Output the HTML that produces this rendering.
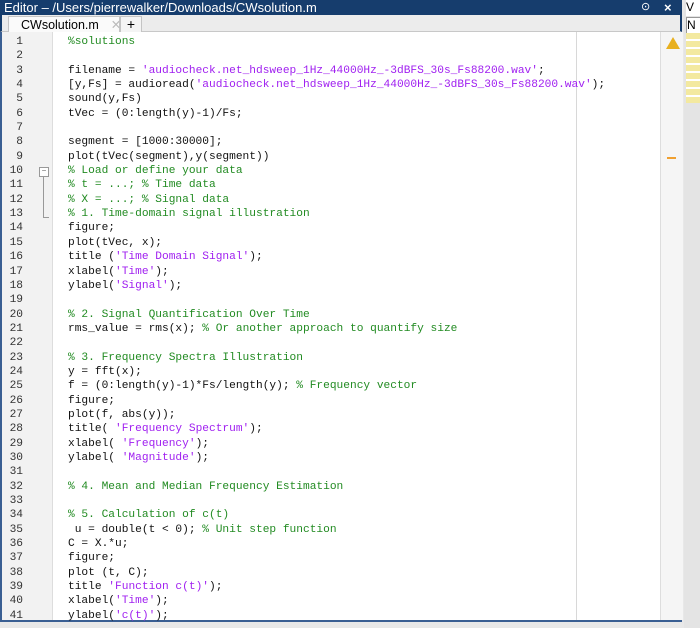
<!DOCTYPE html>
<html><head><style>
body{margin:0;width:700px;height:628px;overflow:hidden;background:#e8e8e8;font-family:"Liberation Sans",sans-serif;position:relative}
.title{position:absolute;left:0;top:0;width:682px;height:15px;background:#163d6d;color:#fff;font-size:13px;line-height:15px;padding-left:4px;box-sizing:border-box}
.tabs{position:absolute;left:0;top:15px;width:682px;height:17px;background:#ececec;border-bottom:1px solid #c8c8c8;border-left:2px solid #163d6d;border-right:2px solid #163d6d;box-sizing:border-box}
.tab{position:absolute;left:6px;top:1px;height:16px;width:112px;background:#fafafa;border:1px solid #c4c4c4;border-bottom:none;font-size:12.5px;line-height:16px;padding-left:12px;box-sizing:border-box}
.tab span{color:#bbb;margin-left:12px}
.plus{position:absolute;left:118px;top:1px;width:22px;height:16px;background:#f4f4f4;border:1px solid #c4c4c4;border-bottom:none;text-align:center;font-size:14px;line-height:15px;box-sizing:border-box}
.ed{position:absolute;left:0;top:32px;width:682px;height:590px;background:#fff;border:2px solid #3a5f93;border-top:none;box-sizing:border-box}
.gut{position:absolute;left:0;top:0;width:50px;height:100%;background:#f2f2f2;border-right:1px solid #ddd}
.vl{position:absolute;left:574px;top:0;width:1px;height:100%;background:#d8d8d8}
.rs{position:absolute;left:658px;top:0;width:22px;height:100%;background:#f5f5f5;border-left:1px solid #ddd}
pre{margin:0;position:absolute;top:3px;font-family:"Liberation Mono",monospace;font-size:11.2px;line-height:14.35px}
.nums{left:0;width:21px;text-align:right;color:#333}
.code{left:66px;color:#111}
.c{color:#228b22}.s{color:#a020f0}
.rp{position:absolute;left:684px;top:0;width:16px;height:628px;background:#e4e4e4}
</style></head><body>
<div class="title">Editor – /Users/pierrewalker/Downloads/CWsolution.m<span style="position:absolute;left:641px;top:0;font-size:11px">⊙</span><span style="position:absolute;left:664px;top:0;font-weight:bold">×</span></div>
<div class="tabs"><div class="tab">CWsolution.m<span>✕</span></div><div class="plus">+</div></div>
<div class="ed">
<div class="gut"></div>
<div style="position:absolute;left:37px;top:135px;width:8px;height:8px;border:1px solid #999;background:#fff;font-size:8px;line-height:6px;text-align:center;color:#666">−</div>
<div style="position:absolute;left:41px;top:145px;width:1px;height:40px;background:#999"></div>
<div style="position:absolute;left:41px;top:185px;width:6px;height:1px;background:#999"></div>
<div class="vl"></div>
<div class="rs"><div style="position:absolute;left:5px;top:5px;width:0;height:0;border-left:7px solid transparent;border-right:7px solid transparent;border-bottom:12px solid #e8b020"></div><div style="position:absolute;left:6px;top:125px;width:9px;height:2px;background:#f0a030"></div></div>
<pre class="nums">1
2
3
4
5
6
7
8
9
10
11
12
13
14
15
16
17
18
19
20
21
22
23
24
25
26
27
28
29
30
31
32
33
34
35
36
37
38
39
40
41</pre>
<pre class="code"><span class="c">%solutions</span>

filename = <span class="s">'audiocheck.net_hdsweep_1Hz_44000Hz_-3dBFS_30s_Fs88200.wav'</span>;
[y,Fs] = audioread(<span class="s">'audiocheck.net_hdsweep_1Hz_44000Hz_-3dBFS_30s_Fs88200.wav'</span>);
sound(y,Fs)
tVec = (0:length(y)-1)/Fs;

segment = [1000:30000];
plot(tVec(segment),y(segment))
<span class="c">% Load or define your data</span>
<span class="c">% t = ...; % Time data</span>
<span class="c">% X = ...; % Signal data</span>
<span class="c">% 1. Time-domain signal illustration</span>
figure;
plot(tVec, x);
title (<span class="s">'Time Domain Signal'</span>);
xlabel(<span class="s">'Time'</span>);
ylabel(<span class="s">'Signal'</span>);

<span class="c">% 2. Signal Quantification Over Time</span>
rms_value = rms(x); <span class="c">% Or another approach to quantify size</span>

<span class="c">% 3. Frequency Spectra Illustration</span>
y = fft(x);
f = (0:length(y)-1)*Fs/length(y); <span class="c">% Frequency vector</span>
figure;
plot(f, abs(y));
title( <span class="s">'Frequency Spectrum'</span>);
xlabel( <span class="s">'Frequency'</span>);
ylabel( <span class="s">'Magnitude'</span>);

<span class="c">% 4. Mean and Median Frequency Estimation</span>

<span class="c">% 5. Calculation of c(t)</span>
 u = double(t &lt; 0); <span class="c">% Unit step function</span>
C = X.*u;
figure;
plot (t, C);
title <span class="s">'Function c(t)'</span>);
xlabel(<span class="s">'Time'</span>);
ylabel(<span class="s">'c(t)'</span>);</pre>
</div>
<div class="rp">
<div style="position:absolute;left:2px;top:0;width:14px;height:16px;background:#fff;font-size:12px">V</div>
<div style="position:absolute;left:2px;top:17px;width:14px;height:15px;background:#fff;border:1px solid #999;font-size:12px">N</div>
<div style="position:absolute;left:2px;top:33px;width:14px;height:70px;background:repeating-linear-gradient(#f3e9a0 0 6px,#fff 6px 8px)"></div>
</div>
</body></html>
